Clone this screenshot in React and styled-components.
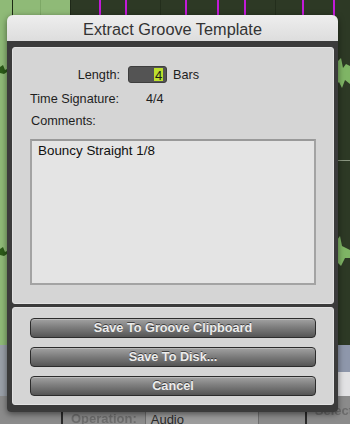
import React from "react";
import styled, { createGlobalStyle } from "styled-components";

const Global = createGlobalStyle`
  html, body { margin: 0; padding: 0; background: #2c3824; }
  #root { width: 350px; height: 424px; }
  * { box-sizing: border-box; }
`;

const Stage = styled.div`
  position: relative;
  width: 350px;
  height: 424px;
  overflow: hidden;
  font-family: "Liberation Sans", Arial, sans-serif;
`;

/* ---------- backdrop: the edit window behind the dialog ---------- */
const Backdrop = styled.div`
  display: grid;
  grid-template-rows: 345px 51px 28px;
  width: 350px;
  height: 424px;
`;

const Timeline = styled.svg`
  display: block;
`;

const MidBand = styled.div`
  display: flex;
  background: #9aa0a8;
`;

const MidSide = styled.div`
  margin-left: auto;
  width: 20px;
  display: grid;
  grid-template-rows: 27px 24px;
`;

const Tone = styled.div`
  background: ${(p) => p.$c};
`;

const InfoStrip = styled.div`
  display: flex;
  align-items: flex-start;
  background: #8b8b8b;
  padding-left: 61px;
  overflow: hidden;
`;

const Divider = styled.div`
  width: 2px;
  align-self: stretch;
  margin: 12px 0 0 ${(p) => p.$ml || 0}px;
  background: #2a2a2a;
  flex: none;
`;

const InfoLabel = styled.div`
  margin: ${(p) => p.$m};
  font-size: 13px;
  font-weight: bold;
  color: #6c6c6c;
  white-space: nowrap;
  filter: blur(0.4px);
  flex: none;
`;

const AudioField = styled.div`
  margin: 13px 0 0 8px;
  width: 114px;
  height: 20px;
  background: #9c9c9c;
  border: 1px solid #6e6e6e;
  border-radius: 3px;
  padding: 2px 0 0 5px;
  font-size: 13px;
  color: #2a2a2a;
  flex: none;
`;

/* ---------- dialog window ---------- */
const Dialog = styled.div`
  position: absolute;
  left: 7px;
  top: 15px;
  width: 331px;
  height: 397px;
  display: flex;
  flex-direction: column;
  border-radius: 6px 6px 4px 4px;
  box-shadow: 0 2px 6px rgba(0, 0, 0, 0.5);
`;

const TitleBar = styled.div`
  height: 26px;
  flex: none;
  display: flex;
  align-items: center;
  justify-content: center;
  background: linear-gradient(#eeeeee, #dddddd);
  border-radius: 6px 6px 0 0;
  font-size: 16.3px;
  color: #333;
  padding-top: 2px;
`;

const Frame = styled.div`
  flex: 1;
  display: flex;
  flex-direction: column;
  gap: 3px;
  padding: 6px 4px 6px 5px;
  background: #3b3b3b;
  border-radius: 0 0 4px 4px;
`;

const Panel = styled.div`
  background: #d5d5d5;
  border: 1px solid #e2e2e2;
  border-radius: 3px;
  padding: ${(p) => p.$pad};
  height: ${(p) => p.$h}px;
  flex: none;
  display: flex;
  flex-direction: column;
  gap: ${(p) => p.$gap || 0}px;
`;

const Row = styled.div`
  display: flex;
  align-items: center;
  height: ${(p) => p.$h}px;
  margin-top: ${(p) => p.$mt || 0}px;
  font-size: 12.7px;
  color: #1e1e1e;
`;

const Label = styled.div`
  width: 90px;
  text-align: ${(p) => p.$align || "left"};
  flex: none;
  padding-left: ${(p) => p.$pl || 0}px;
`;

const LengthField = styled.div`
  margin-left: 8px;
  width: 39px;
  height: 17px;
  background: #545454;
  border: 1px solid #3e3e3e;
  border-radius: 3px;
  display: flex;
  justify-content: flex-end;
  padding: 1px 3px 1px 0;
`;

const Cursor = styled.div`
  width: 9px;
  height: 100%;
  background: #bde02c;
  color: #1a1a1a;
  font-size: 13px;
  line-height: 15px;
  text-align: center;
`;

const Value = styled.div`
  margin-left: ${(p) => p.$ml || 0}px;
`;

const Comments = styled.div`
  flex: 1;
  margin-top: 10px;
  background: #e4e4e4;
  border: 2px solid #a3a3a3;
  border-top-color: #999;
  padding: 2px 6px;
  font-size: 13.4px;
  color: #111;
`;

const Button = styled.button`
  display: block;
  width: 100%;
  height: 20px;
  flex: none;
  padding: 0;
  border: 1px solid #2c2c2c;
  border-radius: 4px;
  background: linear-gradient(#a2a2a2 0%, #7e7e7e 45%, #555 100%);
  box-shadow: inset 0 1px 0 rgba(255, 255, 255, 0.25);
  font-family: "Liberation Sans", Arial, sans-serif;
  font-weight: bold;
  font-size: 12.7px;
  color: #ececec;
  text-shadow: 0 -1px 0 rgba(0, 0, 0, 0.55);
  cursor: default;
`;

const markers = [99, 125, 185, 217, 244, 302, 333];

function TimelineArt() {
  return (
    <Timeline width="350" height="345" viewBox="0 0 350 345">
      <rect x="0" y="0" width="350" height="345" fill="#2d3925" />
      <rect x="0" y="0" width="70" height="345" fill="#8fba77" />
      <rect x="12" y="0" width="1" height="345" fill="#1c2a14" />
      <rect x="40" y="0" width="1" height="345" fill="#7da866" />
      <rect x="70" y="0" width="1" height="345" fill="#1e2818" />
      <rect x="160" y="0" width="1" height="345" fill="#232e1c" />
      <rect x="275" y="0" width="1" height="345" fill="#232e1c" />
      {markers.map((x) => (
        <rect key={x} x={x} y="0" width="2" height="345" fill="#c21ad8" />
      ))}
      <rect x="338" y="160" width="12" height="1" fill="#8a9680" />
      <path d="M337 62 L341 58 L343 68 L346 64 L350 66 L350 84 L345 80 L342 88 L339 82 L337 84 Z" fill="#7fb565" />
      <path d="M337 240 L340 236 L342 246 L346 248 L350 250 L350 258 L345 258 L341 266 L337 262 Z" fill="#7fb565" />
      <path d="M0 67 L3 65 L5 70 L7 69 L7 72 L4 74 L0 73 Z" fill="#2b5a18" />
      <path d="M0 249 L3 247 L5 252 L7 251 L7 254 L4 256 L0 255 Z" fill="#2b5a18" />
    </Timeline>
  );
}

export default function App() {
  return (
    <>
      <Global />
      <Stage>
        <Backdrop>
          <TimelineArt />
          <MidBand>
            <MidSide>
              <Tone $c="#8e97ab" />
              <Tone $c="#e2e2e4" />
            </MidSide>
          </MidBand>
          <InfoStrip>
            <Divider />
            <InfoLabel $m="15px 0 0 8px">Operation:</InfoLabel>
            <AudioField>Audio</AudioField>
            <Divider $ml={46} />
            <InfoLabel $m="7px 0 0 8px">Selecti</InfoLabel>
          </InfoStrip>
        </Backdrop>

        <Dialog>
          <TitleBar>Extract Groove Template</TitleBar>
          <Frame>
            <Panel $h={257} $pad="18px 17px 18px 17px">
              <Row $h={17}>
                <Label $align="right">Length:</Label>
                <LengthField>
                  <Cursor>4</Cursor>
                </LengthField>
                <Value $ml={6}>Bars</Value>
              </Row>
              <Row $h={16} $mt={8}>
                <Label>Time Signature:</Label>
                <Value $ml={26}>4/4</Value>
              </Row>
              <Row $h={16} $mt={6}>
                <Label $pl={1}>Comments:</Label>
              </Row>
              <Comments>Bouncy Straight 1/8</Comments>
            </Panel>
            <Panel $h={98} $pad="10px 17px 0 17px" $gap={9}>
              <Button>Save To Groove Clipboard</Button>
              <Button>Save To Disk...</Button>
              <Button>Cancel</Button>
            </Panel>
          </Frame>
        </Dialog>
      </Stage>
    </>
  );
}
